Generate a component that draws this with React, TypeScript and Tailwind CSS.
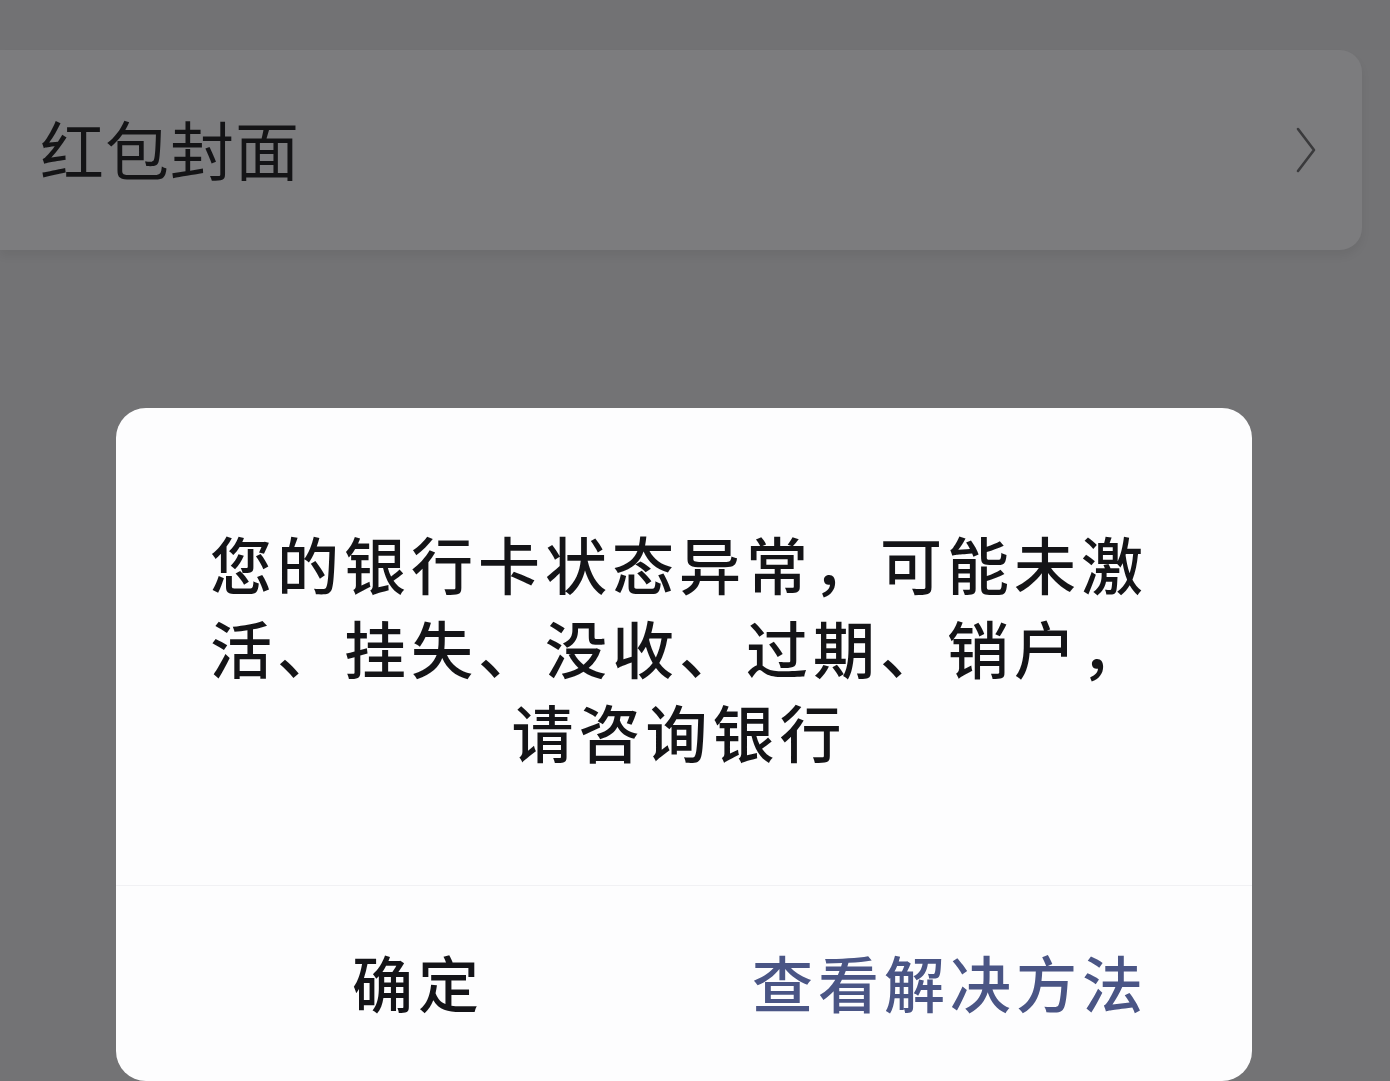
import React from 'react';

const cjk = { fontFamily: '"Noto Sans CJK SC", "Noto Sans", sans-serif' };

const Chevron: React.FC = () => (
  <svg width="24" height="48" viewBox="0 0 24 48" fill="none">
    <path d="M4 3 L20 24 L4 45" stroke="#3a3a3c" strokeWidth="2.6" strokeLinecap="round" strokeLinejoin="round" />
  </svg>
);

const App: React.FC = () => {
  return (
    <div className="w-[1390px] h-[1081px] overflow-hidden bg-[#737375] flex flex-col" style={cjk}>
      {/* top strip */}
      <div className="h-[50px] bg-[#727274] shrink-0" />

      {/* list row */}
      <div className="h-[200px] mr-[28px] bg-[#7c7c7e] rounded-r-[22px] shadow-[0_6px_10px_rgba(0,0,0,0.06)] flex items-center justify-between pl-[40px] pr-[44px] shrink-0">
        <span className="text-[64px] leading-none text-[#141416] tracking-[1px] -mt-[6px]">红包封面</span>
        <Chevron />
      </div>

      <div className="h-[158px] shrink-0" />

      {/* dialog */}
      <div className="mx-[116px] w-[1136px] h-[673px] bg-[#fdfdfe] rounded-[30px] flex flex-col shrink-0">
        <div className="pt-[113px] h-[477px] pl-[50px] pr-[60px] text-center text-[62px] leading-[84px] font-medium text-[#141417] tracking-[5px]">
          <p>您的银行卡状态异常，可能未激</p>
          <p>活、挂失、没收、过期、销户，</p>
          <p>请咨询银行</p>
        </div>
        <div className="h-px bg-[#f1f1f4]" />
        <div className="flex-1 grid grid-cols-2 items-center pb-[4px] text-[61px] font-medium tracking-[5px]">
          <span className="text-center pl-[36px] text-[#141418]">确定</span>
          <span className="text-center pr-[36px] text-[#4a5585]">查看解决方法</span>
        </div>
      </div>
    </div>
  );
};

export default App;
